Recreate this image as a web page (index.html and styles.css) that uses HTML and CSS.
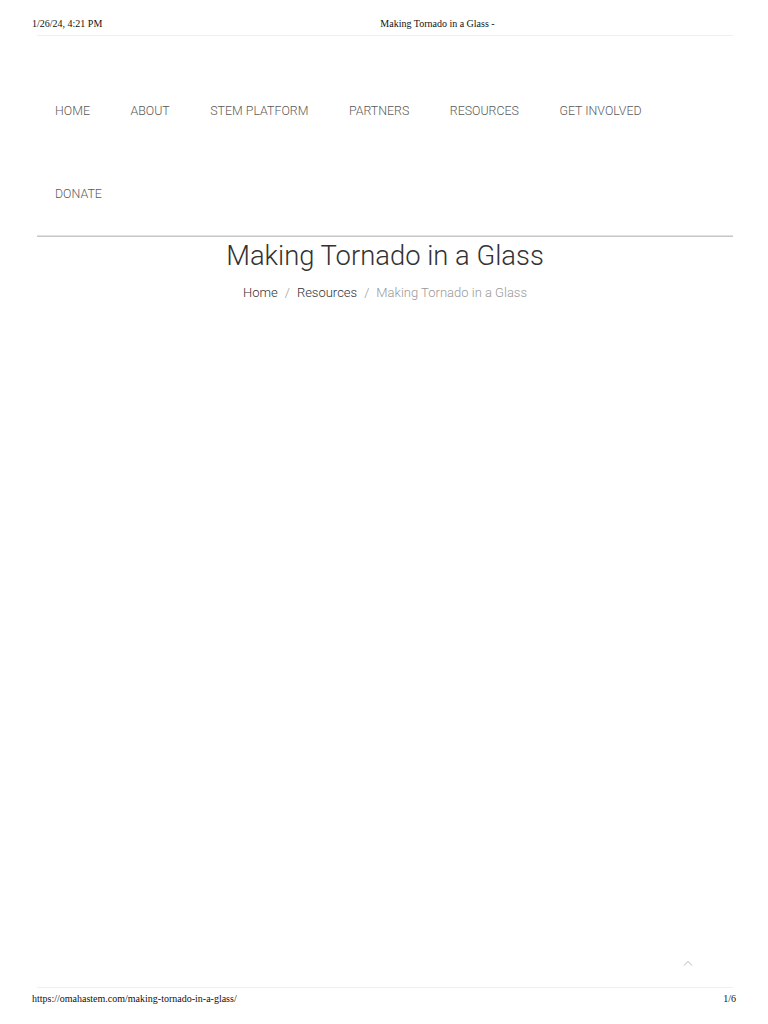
FILE: index.html
```html
<!DOCTYPE html>
<html>
<head>
<meta charset="utf-8">
<link rel="stylesheet" href="styles.css">
</head>
<body>
<div class="page">
  <div class="print-head">
    <span class="ph-date">1/26/24, 4:21 PM</span>
    <span class="ph-title">Making Tornado in a Glass -</span>
  </div>
  <div class="wrap">
    <div class="head-rule"></div>
    <nav class="nav">
      <a class="nav-item">HOME</a>
      <a class="nav-item">ABOUT</a>
      <a class="nav-item">STEM PLATFORM</a>
      <a class="nav-item">PARTNERS</a>
      <a class="nav-item">RESOURCES</a>
      <a class="nav-item">GET INVOLVED</a>
      <a class="nav-item">DONATE</a>
    </nav>
    <div class="title-rule"></div>
    <h1 class="title">Making Tornado in a Glass</h1>
    <div class="crumbs">
      <a class="crumb">Home</a><span class="sep">/</span><a class="crumb">Resources</a><span class="sep">/</span><span class="crumb current">Making Tornado in a Glass</span>
    </div>
  </div>
  <div class="spacer"></div>
  <div class="wrap">
    <div class="foot-rule"></div>
  </div>
  <div class="print-foot">
    <span>https://omahastem.com/making-tornado-in-a-glass/</span>
    <span>1/6</span>
  </div>
  <svg class="to-top" width="10" height="6" viewBox="0 0 10 6"><path d="M1 5.5 L5 1.5 L9 5.5" fill="none" stroke="#b5b5b5" stroke-width="1"/></svg>
</div>
</body>
</html>
```
FILE: styles.css
```css
html, body { margin: 0; padding: 0; background: #fff; }
.page {
  position: relative;
  width: 768px;
  height: 1024px;
  display: flex;
  flex-direction: column;
  overflow: hidden;
}
.print-head {
  display: flex;
  padding: 18px 32px 0 32px;
  font-family: "Liberation Serif", serif;
  font-size: 10px;
  line-height: 12px;
  color: #111;
}
.ph-title { margin-left: 278px; }
.wrap { padding: 0 35px 0 37px; }
.head-rule { height: 1px; background: #eeeeee; margin-top: 5px; }
.nav {
  display: flex;
  flex-wrap: wrap;
  width: 680px;
  margin-top: 33px;
  padding-left: 0;
}
.nav-item {
  padding: 0 20.5px 0 18px;
  margin-right: 2px;
  height: 83px;
  line-height: 83px;
  font-family: Roboto, "Liberation Sans", sans-serif;
  font-weight: 300;
  font-size: 12.4px;
  color: #5a5a5a;
  text-decoration: none;
}
.title-rule { height: 1px; background: #c8c8c8; border-top: 1px solid #e0e0e0; }
.title {
  margin: 2px 0 0 0;
  text-align: center;
  font-family: Roboto, "Liberation Sans", sans-serif;
  font-weight: 300;
  font-size: 27.4px;
  line-height: 34px;
  color: #333;
}
.crumbs {
  margin-top: 10px;
  text-align: center;
  font-family: Roboto, "Liberation Sans", sans-serif;
  font-weight: 300;
  font-size: 13px;
  line-height: 20px;
  color: #333;
}
.sep { color: #999; margin: 0 7px; }
.current { color: #999; }
.spacer { flex: 1; }
.foot-rule { height: 1px; background: #eeeeee; }
.print-foot {
  display: flex;
  justify-content: space-between;
  padding: 5px 32px 19px 32px;
  font-family: "Liberation Serif", serif;
  font-size: 10px;
  line-height: 12px;
  color: #111;
}
.to-top { position: absolute; left: 683px; top: 960px; }
```
